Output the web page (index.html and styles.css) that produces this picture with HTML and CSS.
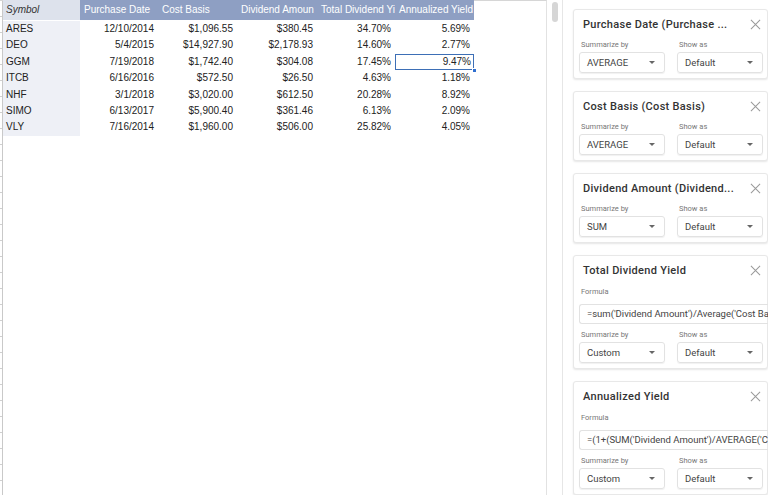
FILE: index.html
```html
<!DOCTYPE html>
<html>
<head>
<meta charset="utf-8">
<link rel="stylesheet" href="styles.css">
</head>
<body>
<div class="page">
  <div class="sheet">
    <div class="gutter"></div>
    <div class="table">
      <div class="row head">
        <div class="cell sym">Symbol</div>
        <div class="cell">Purchase Date</div>
        <div class="cell">Cost Basis</div>
        <div class="cell">Dividend Amoun</div>
        <div class="cell">Total Dividend Yi</div>
        <div class="cell">Annualized Yield</div>
      </div>
      <div class="row"><div class="cell sym">ARES</div><div class="cell num">12/10/2014</div><div class="cell num">$1,096.55</div><div class="cell num">$380.45</div><div class="cell num">34.70%</div><div class="cell num">5.69%</div></div>
      <div class="row"><div class="cell sym">DEO</div><div class="cell num">5/4/2015</div><div class="cell num">$14,927.90</div><div class="cell num">$2,178.93</div><div class="cell num">14.60%</div><div class="cell num">2.77%</div></div>
      <div class="row"><div class="cell sym">GGM</div><div class="cell num">7/19/2018</div><div class="cell num">$1,742.40</div><div class="cell num">$304.08</div><div class="cell num">17.45%</div><div class="cell num selected">9.47%<span class="handle"></span></div></div>
      <div class="row"><div class="cell sym">ITCB</div><div class="cell num">6/16/2016</div><div class="cell num">$572.50</div><div class="cell num">$26.50</div><div class="cell num">4.63%</div><div class="cell num">1.18%</div></div>
      <div class="row"><div class="cell sym">NHF</div><div class="cell num">3/1/2018</div><div class="cell num">$3,020.00</div><div class="cell num">$612.50</div><div class="cell num">20.28%</div><div class="cell num">8.92%</div></div>
      <div class="row"><div class="cell sym">SIMO</div><div class="cell num">6/13/2017</div><div class="cell num">$5,900.40</div><div class="cell num">$361.46</div><div class="cell num">6.13%</div><div class="cell num">2.09%</div></div>
      <div class="row"><div class="cell sym">VLY</div><div class="cell num">7/16/2014</div><div class="cell num">$1,960.00</div><div class="cell num">$506.00</div><div class="cell num">25.82%</div><div class="cell num">4.05%</div></div>
    </div>
    <div class="filler"></div>
  </div>
  <div class="scrollbar"><div class="thumb"></div></div>
  <div class="panel">
    <div class="card">
      <div class="card-head"><span class="title">Purchase Date (Purchase ...</span><svg class="close" viewBox="0 0 12 12"><path d="M1 1L11 11M11 1L1 11"/></svg></div>
      <div class="fields">
        <div class="field"><div class="label">Summarize by</div><div class="select"><span>AVERAGE</span><span class="caret"></span></div></div>
        <div class="field"><div class="label">Show as</div><div class="select"><span>Default</span><span class="caret"></span></div></div>
      </div>
    </div>
    <div class="card">
      <div class="card-head"><span class="title">Cost Basis (Cost Basis)</span><svg class="close" viewBox="0 0 12 12"><path d="M1 1L11 11M11 1L1 11"/></svg></div>
      <div class="fields">
        <div class="field"><div class="label">Summarize by</div><div class="select"><span>AVERAGE</span><span class="caret"></span></div></div>
        <div class="field"><div class="label">Show as</div><div class="select"><span>Default</span><span class="caret"></span></div></div>
      </div>
    </div>
    <div class="card">
      <div class="card-head"><span class="title">Dividend Amount (Dividend...</span><svg class="close" viewBox="0 0 12 12"><path d="M1 1L11 11M11 1L1 11"/></svg></div>
      <div class="fields">
        <div class="field"><div class="label">Summarize by</div><div class="select"><span>SUM</span><span class="caret"></span></div></div>
        <div class="field"><div class="label">Show as</div><div class="select"><span>Default</span><span class="caret"></span></div></div>
      </div>
    </div>
    <div class="card">
      <div class="card-head"><span class="title">Total Dividend Yield</span><svg class="close" viewBox="0 0 12 12"><path d="M1 1L11 11M11 1L1 11"/></svg></div>
      <div class="label formula-label">Formula</div>
      <div class="formula">=sum('Dividend Amount')/Average('Cost Ba</div>
      <div class="fields">
        <div class="field"><div class="label">Summarize by</div><div class="select"><span>Custom</span><span class="caret"></span></div></div>
        <div class="field"><div class="label">Show as</div><div class="select"><span>Default</span><span class="caret"></span></div></div>
      </div>
    </div>
    <div class="card">
      <div class="card-head"><span class="title">Annualized Yield</span><svg class="close" viewBox="0 0 12 12"><path d="M1 1L11 11M11 1L1 11"/></svg></div>
      <div class="label formula-label">Formula</div>
      <div class="formula">=(1+(SUM('Dividend Amount')/AVERAGE('C</div>
      <div class="fields">
        <div class="field"><div class="label">Summarize by</div><div class="select"><span>Custom</span><span class="caret"></span></div></div>
        <div class="field"><div class="label">Show as</div><div class="select"><span>Default</span><span class="caret"></span></div></div>
      </div>
    </div>
  </div>
</div>
</body>
</html>
```

FILE: styles.css
```css
* { box-sizing: border-box; }
html, body { margin: 0; padding: 0; background: #fff; }
body { width: 768px; height: 495px; overflow: hidden; }

.page {
  display: grid;
  grid-template-columns: 547px 16px 1fr;
  height: 495px;
}

/* ---------- spreadsheet ---------- */
.sheet {
  display: flex;
  align-items: flex-start;
  height: 495px;
  border-right: 1px solid #e2e2e2;
  border-top: 1px solid #d6d6d6;
}
.gutter {
  width: 3px;
  height: 100%;
  border-right: 1px solid #c9c9c9;
  background: repeating-linear-gradient(to bottom, transparent 0 15px, #d0d0d0 15px 16px);
  background-size: 2px 100%;
  background-repeat: no-repeat;
}
.table {
  font-family: "Liberation Sans", Arial, sans-serif;
  font-size: 10px;
  color: #222;
  margin-top: -1px;
}
.row {
  display: grid;
  grid-template-columns: 77px 78px 79px 80px 78px 79px;
  height: 16.4px;
  line-height: 16.4px;
}
.row.head {
  height: 20px;
  line-height: 20px;
  background: #8e9fc3;
  color: #fff;
  margin-bottom: 1px;
}
.cell {
  padding: 0 4px 0 3px;
  white-space: nowrap;
  overflow: hidden;
  position: relative;
}
.head .cell { padding-left: 4px; padding-right: 0; }
.cell.sym { background: #eef0f6; padding-left: 3px; }
.row.head .cell.sym {
  background: #dde2ec;
  color: #333;
  font-style: italic;
}
.num { text-align: right; }
.selected {
  overflow: visible;
  border: 1.5px solid #3d6fb6;
  line-height: 13.4px;
  padding-right: 2px;
}
.handle {
  position: absolute;
  right: -4px;
  bottom: -4px;
  width: 5px;
  height: 5px;
  background: #2f6fd0;
  border: 1px solid #fff;
}
.filler { flex: 1; }

/* ---------- scrollbar ---------- */
.scrollbar {
  border-right: 1px solid #e6e6e6;
  padding: 2px 4px 0 5px;
}
.thumb {
  width: 6px;
  height: 20px;
  background: #d6d6d6;
  border-radius: 3px;
}

/* ---------- pivot panel ---------- */
.panel {
  font-family: Roboto, "Noto Sans", sans-serif;
  padding: 9px 0 0 10px;
  display: flex;
  flex-direction: column;
  gap: 12px;
  overflow: hidden;
}
.card {
  width: 195px;
  border: 1px solid #e8e8e8;
  border-radius: 3px;
  box-shadow: 0 1px 2px rgba(0,0,0,0.10);
  padding: 7px 5px 5px 5px;
  background: #fff;
  flex-shrink: 0;
}
.card-head {
  display: flex;
  justify-content: space-between;
  align-items: center;
  padding: 0 0 0 4px;
  height: 14px;
}
.title {
  font-size: 11px;
  font-weight: 500;
  color: #333;
  letter-spacing: 0.3px;
  white-space: nowrap;
}
.close {
  width: 11px;
  height: 11px;
  margin-right: 1px;
}
.close path { stroke: #999; stroke-width: 1.1; fill: none; }
.label {
  font-size: 7.5px;
  color: #777;
  line-height: 11px;
  padding-left: 2px;
}
.fields {
  display: grid;
  grid-template-columns: 86px 86px;
  gap: 12px;
  margin-top: 8px;
}
.select {
  margin-top: 2px;
  height: 21px;
  border: 1px solid #e2e2e2;
  border-radius: 3px;
  box-shadow: 0 1px 1px rgba(0,0,0,0.06);
  display: flex;
  justify-content: space-between;
  align-items: center;
  padding: 0 9px 0 7px;
  font-size: 9.5px;
  color: #444;
}
.caret {
  width: 0;
  height: 0;
  border-left: 3px solid transparent;
  border-right: 3px solid transparent;
  border-top: 3px solid #666;
}
.formula-label { margin-top: 9px; }
.formula {
  margin-top: 7px;
  height: 20px;
  width: 200px;
  border: 1px solid #e2e2e2;
  border-right: none;
  border-radius: 3px 0 0 3px;
  font-size: 9.5px;
  color: #444;
  line-height: 18px;
  padding-left: 7px;
  white-space: nowrap;
  overflow: hidden;
}
.formula + .fields { margin-top: 5px; }
```
